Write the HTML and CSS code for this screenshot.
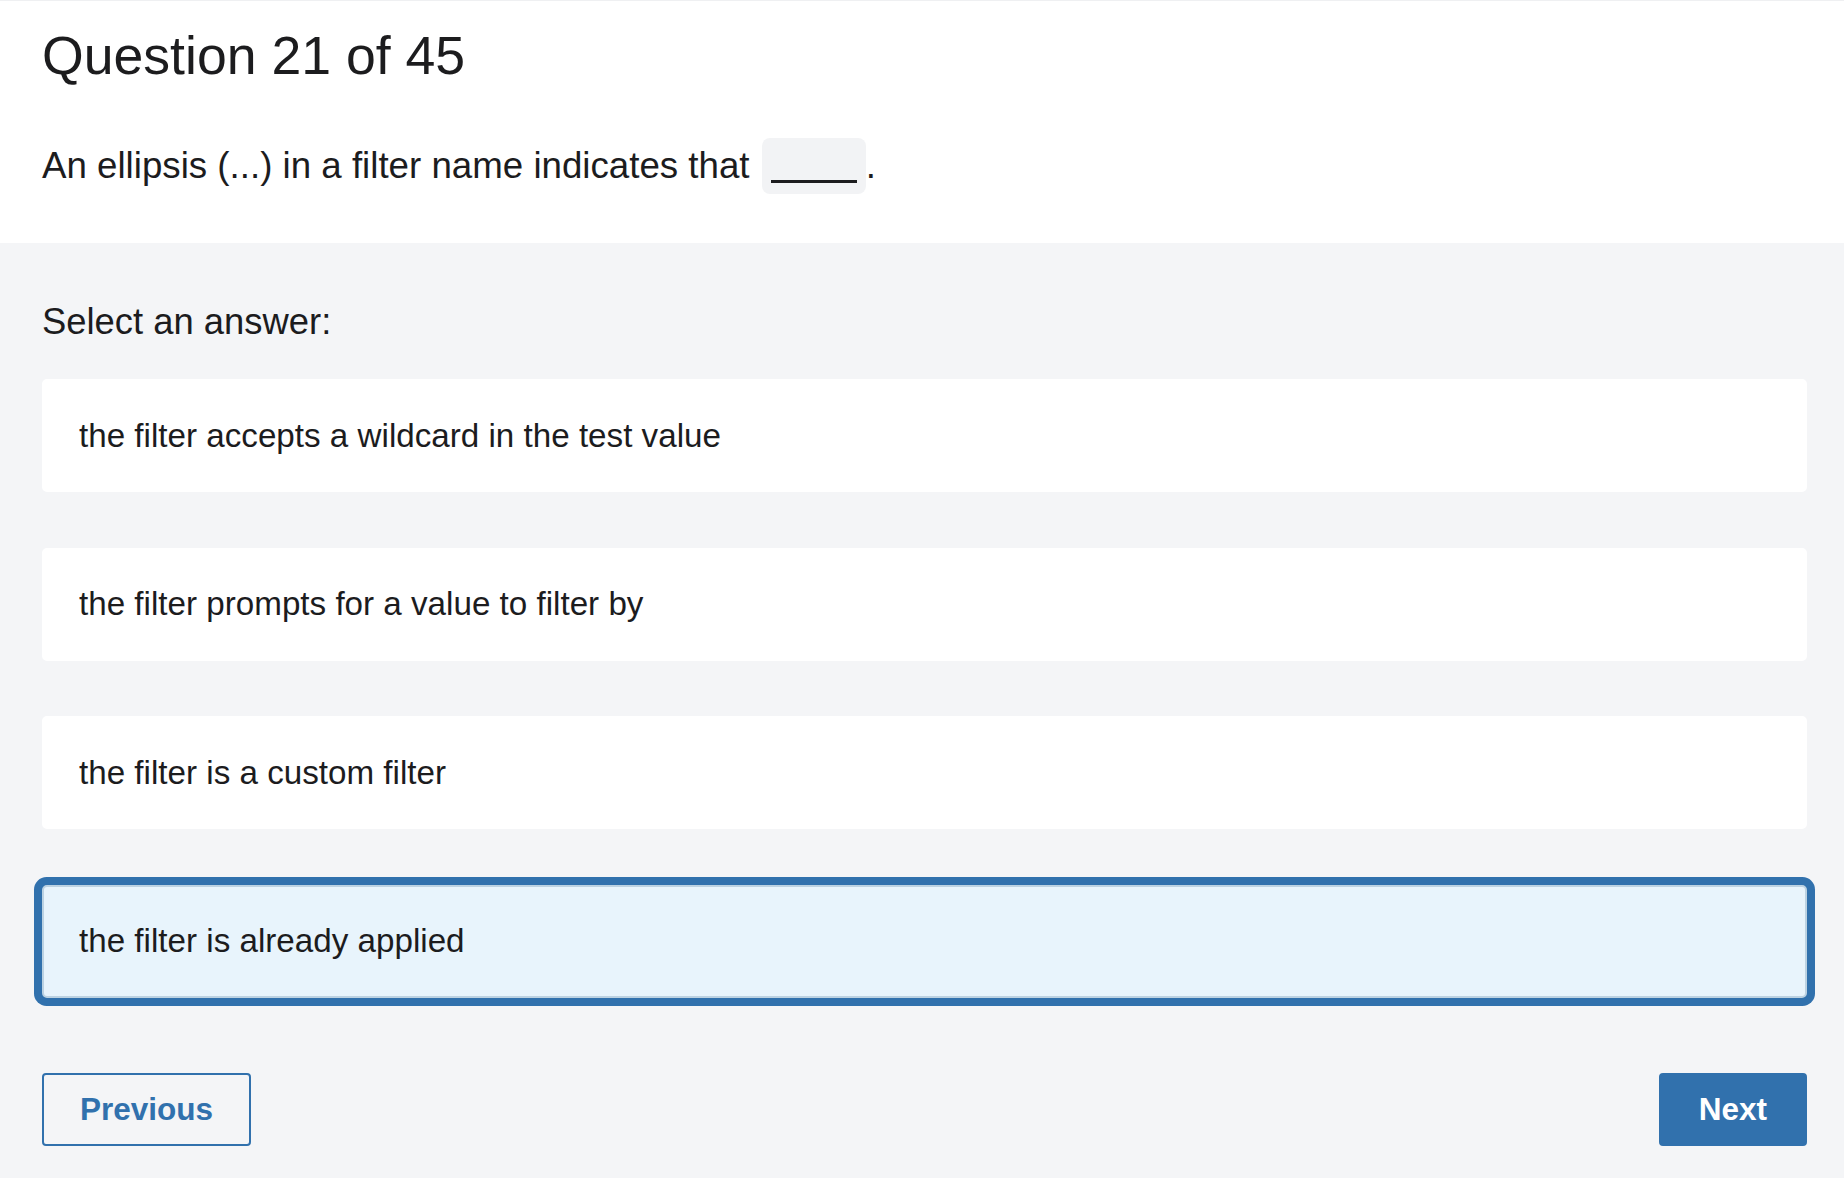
FILE: index.html
```html
<!DOCTYPE html>
<html>
<head>
  <title>Question 21 of 45</title>
  <link rel="stylesheet" href="styles.css">
</head>
<body>
  <div class="question-header">
    <h1 class="question-count">Question 21 of 45</h1>
    <p class="question-text">An ellipsis (...) in a filter name indicates that <span class="blank"><span class="blank-line"></span></span>.</p>
  </div>

  <div class="answer-area">
    <h2 class="answer-label">Select an answer:</h2>

    <div class="answer-list">
      <div class="answer">the filter accepts a wildcard in the test value</div>
      <div class="answer">the filter prompts for a value to filter by</div>
      <div class="answer">the filter is a custom filter</div>
      <div class="answer selected">the filter is already applied</div>
    </div>

    <div class="nav-buttons">
      <button class="prev-btn">Previous</button>
      <button class="next-btn">Next</button>
    </div>
  </div>
</body>
</html>
```

FILE: styles.css
```css
html, body {
  margin: 0;
  padding: 0;
}

body {
  font-family: "Liberation Sans", Arial, sans-serif;
  color: #1c1c1e;
  background-color: #f4f5f7;
}

.question-header {
  background-color: #fff;
  border-top: 1px solid #eff0f2;
  padding: 22px 37px 49px 42px;
}

.question-count {
  margin: 0;
  font-size: 53.6px;
  font-weight: normal;
  line-height: 64px;
}

.question-text {
  margin: 51px 0 0 0;
  font-size: 36.7px;
  line-height: 56px;
}

.blank {
  display: inline-block;
  vertical-align: top;
  height: 56px;
  padding: 0 9px;
  margin-left: 2px;
  background-color: #f2f3f5;
  border-radius: 8px;
  box-sizing: border-box;
}

.blank-line {
  display: inline-block;
  width: 86px;
  height: 42px;
  border-bottom: 3px solid #1c1c1e;
}

.answer-area {
  padding: 57px 37px 0 42px;
}

.answer-label {
  margin: 0;
  font-size: 36.4px;
  font-weight: normal;
  line-height: 44px;
}

.answer-list {
  margin-top: 35px;
  display: flex;
  flex-direction: column;
  gap: 55.5px;
}

.answer {
  height: 113px;
  box-sizing: border-box;
  display: flex;
  align-items: center;
  padding-left: 35px;
  background-color: #fff;
  border: 2px solid #fff;
  border-radius: 5px;
  font-size: 33.2px;
  cursor: pointer;
}

.answer.selected {
  background-color: #e8f4fc;
  border-color: #bcd2e2;
  box-shadow: 0 0 0 8px #3171ad;
}

.nav-buttons {
  margin-top: 75px;
  display: flex;
  justify-content: space-between;
}

.prev-btn,
.next-btn {
  height: 73px;
  padding: 0 36px;
  border: 2px solid #3171ad;
  border-radius: 4px;
  font-family: "Liberation Sans", Arial, sans-serif;
  font-size: 31.5px;
  font-weight: bold;
  cursor: pointer;
}

.prev-btn {
  background-color: transparent;
  color: #3171ad;
}

.next-btn {
  background-color: #3171ad;
  color: #fff;
  padding: 0 38px;
}
```
